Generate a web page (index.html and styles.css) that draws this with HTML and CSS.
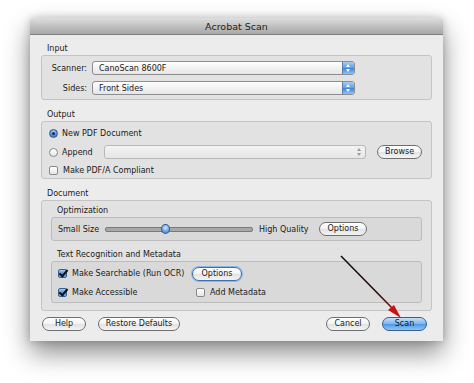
FILE: index.html
```html
<!DOCTYPE html>
<html lang="en">
<head>
    <meta charset="UTF-8">
    <title>Acrobat Scan</title>
    <link rel="stylesheet" href="styles.css">
</head>
<body>
    <div class="window">
        <div class="titlebar">Acrobat Scan</div>

        <div class="content">
            <div class="section-label">Input</div>
            <div class="group input-group">
                <div class="row">
                    <span class="field-label">Scanner:</span>
                    <div class="popup"><span>CanoScan 8600F</span><span class="stepper"></span></div>
                </div>
                <div class="row">
                    <span class="field-label">Sides:</span>
                    <div class="popup"><span>Front Sides</span><span class="stepper"></span></div>
                </div>
            </div>

            <div class="section-label">Output</div>
            <div class="group output-group">
                <div class="row">
                    <span class="radio checked"></span>
                    <span>New PDF Document</span>
                </div>
                <div class="row">
                    <span class="radio"></span>
                    <span class="append-label">Append</span>
                    <div class="popup disabled"><span></span><span class="stepper"></span></div>
                    <button class="btn browse">Browse</button>
                </div>
                <div class="row">
                    <span class="check"></span>
                    <span>Make PDF/A Compliant</span>
                </div>
            </div>

            <div class="section-label">Document</div>
            <div class="group doc-group">
                <div class="sub-label">Optimization</div>
                <div class="group inner opt-row">
                    <span class="small-label">Small Size</span>
                    <div class="slider"><span class="thumb"></span></div>
                    <span class="high-label">High Quality</span>
                    <button class="btn">Options</button>
                </div>

                <div class="sub-label">Text Recognition and Metadata</div>
                <div class="group inner ocr-group">
                    <div class="row">
                        <span class="check checked"></span>
                        <span class="ocr-label">Make Searchable (Run OCR)</span>
                        <button class="btn focused">Options</button>
                    </div>
                    <div class="row">
                        <span class="check checked"></span>
                        <span class="ocr-label">Make Accessible</span>
                        <span class="check"></span>
                        <span>Add Metadata</span>
                    </div>
                </div>
            </div>
        </div>

        <div class="footer">
            <button class="btn help">Help</button>
            <button class="btn restore">Restore Defaults</button>
            <span class="spacer"></span>
            <button class="btn cancel">Cancel</button>
            <button class="btn primary">Scan</button>
        </div>
    </div>

    <!-- callout arrow drawn over the dialog -->
    <svg class="arrow" width="474" height="383" viewBox="0 0 474 383">
        <defs>
            <linearGradient id="arrowGrad" x1="341" y1="256" x2="402" y2="318" gradientUnits="userSpaceOnUse">
                <stop offset="0" stop-color="#111"/>
                <stop offset="0.6" stop-color="#2a0a0a"/>
                <stop offset="1" stop-color="#c01010"/>
            </linearGradient>
        </defs>
        <line x1="341" y1="256" x2="395" y2="311" stroke="url(#arrowGrad)" stroke-width="1.6"/>
        <polygon points="401,318 388,310 394,305" fill="#c81212"/>
    </svg>
</body>
</html>
```

FILE: styles.css
```css
/* General Styles */
body {
    margin: 0;
    padding: 0;
    background: #fff;
    font-family: "DejaVu Sans", "Lucida Grande", sans-serif;
    font-size: 8px;
    color: #1a1a1a;
    white-space: nowrap;
    width: 474px;
    height: 383px;
    overflow: hidden;
}

.window {
    width: 413px;
    margin: 18px 0 0 30px;
    background: #ececec;
    box-shadow: 0 12px 26px rgba(0, 0, 0, 0.45), 0 0 8px rgba(0, 0, 0, 0.2);
    border-radius: 3px 3px 0 0;
}

.titlebar {
    height: 17px;
    line-height: 17px;
    text-align: center;
    font-size: 9.5px;
    color: #222;
    background: linear-gradient(#dedede, #bcbcbc 60%, #a8a8a8);
    border-bottom: 1px solid #7e7e7e;
    border-radius: 3px 3px 0 0;
    box-sizing: border-box;
}

.content {
    padding: 6px 11px 0 11px;
}

.section-label {
    line-height: 12px;
    padding: 2px 0 0 6px;
    color: #222;
}

.section-label + .group {
    margin-bottom: 7px;
}

.group {
    background: #e2e2e2;
    border: 1px solid #c4c4c4;
    border-radius: 3px;
}

.row {
    display: flex;
    align-items: center;
}

/* Input */
.input-group {
    padding: 5px 0 4px 0;
}

.input-group .row + .row {
    margin-top: 6px;
}

.field-label {
    width: 45px;
    text-align: right;
    margin-right: 5px;
}

.popup {
    width: 263px;
    height: 14px;
    box-sizing: border-box;
    display: flex;
    align-items: center;
    justify-content: space-between;
    border: 1px solid #8e8e8e;
    border-radius: 3px;
    background: linear-gradient(#ffffff, #f2f2f2 50%, #e6e6e6);
    padding-left: 6px;
    overflow: hidden;
}

.stepper {
    width: 11px;
    height: 12px;
    background: linear-gradient(#a9cbf1, #5d9de6 50%, #3a85de 51%, #8fc2f3);
    border-left: 1px solid #5c7fa8;
    position: relative;
}

.stepper::before,
.stepper::after {
    content: "";
    position: absolute;
    left: 3px;
    border-left: 2.5px solid transparent;
    border-right: 2.5px solid transparent;
}

.stepper::before {
    top: 2px;
    border-bottom: 3px solid #fff;
}

.stepper::after {
    bottom: 2px;
    border-top: 3px solid #fff;
}

/* Output */
.output-group {
    padding: 5px 9px 2px 7px;
}

.output-group .row {
    height: 12px;
}

.output-group .row:nth-child(2) {
    height: 14px;
    margin: 6px 0 5px 0;
}

.radio {
    width: 9px;
    height: 9px;
    border-radius: 50%;
    border: 1px solid #8a8a8a;
    background: linear-gradient(#fff, #e8e8e8);
    margin-right: 4px;
    box-sizing: border-box;
    position: relative;
}

.radio.checked {
    border-color: #365b8e;
    background: radial-gradient(circle at 50% 30%, #b7d6f6, #3a7fd6 70%);
}

.radio.checked::after {
    content: "";
    position: absolute;
    left: 2px;
    top: 2px;
    width: 3px;
    height: 3px;
    border-radius: 50%;
    background: #1b2a3a;
}

.append-label {
    width: 42px;
}

.popup.disabled {
    width: 262px;
    background: linear-gradient(#f3f3f3, #e6e6e6);
    border-color: #b8b8b8;
}

.popup.disabled .stepper {
    background: transparent;
    border-left: none;
}

.popup.disabled .stepper::before {
    border-bottom-color: #9a9a9a;
}

.popup.disabled .stepper::after {
    border-top-color: #9a9a9a;
}

.check {
    width: 9px;
    height: 9px;
    box-sizing: border-box;
    border: 1px solid #8a8a8a;
    border-radius: 2px;
    background: linear-gradient(#fff, #e6e6e6);
    margin-right: 5px;
    position: relative;
}

.check.checked {
    border-color: #3b5f8f;
    background: linear-gradient(#a8cdf4, #4a8ddf 55%, #78b1ee);
}

.check.checked::after {
    content: "";
    position: absolute;
    left: 2px;
    top: -2px;
    width: 3px;
    height: 7px;
    border-right: 2px solid #111;
    border-bottom: 2px solid #111;
    transform: rotate(40deg);
}

/* Buttons */
.btn {
    font-family: inherit;
    font-size: 8px;
    color: #1a1a1a;
    height: 14px;
    padding: 0;
    line-height: 12px;
    border: 1px solid #6e6e6e;
    border-radius: 7px;
    background: linear-gradient(#ffffff, #f3f3f3 50%, #e2e2e2 51%, #f4f4f4);
    cursor: pointer;
}

.browse {
    margin-left: 11px;
    width: 45px;
}

.btn.focused {
    border-color: #3f6fae;
    box-shadow: 0 0 0 1px #8cb6e8;
}

.btn.primary {
    border-color: #3d5f8c;
    background: linear-gradient(#c7e0fa, #79b3ef 50%, #4f97e6 51%, #8cc6f6);
}

/* Document */
.doc-group {
    padding: 2px 9px 7px 9px;
    margin-bottom: 0 !important;
}

.sub-label {
    line-height: 12px;
    padding: 2px 0 0 6px;
}

.inner {
    background: #d9d9d9;
    border-color: #bcbcbc;
}

.opt-row {
    height: 24px;
    box-sizing: border-box;
    display: flex;
    align-items: center;
    padding-left: 6px;
    margin-bottom: 6px;
}

.small-label {
    width: 41px;
}

.slider {
    width: 146px;
    height: 3px;
    margin: 0 6px 0 6px;
    background: #a8a8a8;
    border: 1px solid #7a7a7a;
    border-radius: 2px;
    position: relative;
}

.thumb {
    position: absolute;
    left: 55px;
    top: -4px;
    width: 9px;
    height: 10px;
    box-sizing: border-box;
    border-radius: 50%;
    border: 1px solid #36598a;
    background: radial-gradient(circle at 50% 35%, #d5e8fb, #4d8fdf 75%);
}

.high-label {
    width: 55px;
}

.opt-row .btn {
    margin-left: 5px;
    width: 48px;
}

.ocr-group {
    padding: 4px 0 2px 6px;
}

.ocr-group .row {
    height: 15px;
}

.ocr-group .row + .row {
    margin-top: 4px;
}

.ocr-label {
    width: 124px;
}

.ocr-group .btn {
    width: 50px;
    margin-left: -4px;
}

/* Footer */
.footer {
    display: flex;
    align-items: center;
    padding: 6px 16px 10px 12px;
    gap: 12px;
}

.footer .help,
.footer .cancel {
    width: 44px;
}

.footer .restore {
    width: 82px;
}

.footer .primary {
    width: 45px;
}

.footer .spacer {
    flex: 1;
}

.arrow {
    position: absolute;
    left: 0;
    top: 0;
    pointer-events: none;
}
```
